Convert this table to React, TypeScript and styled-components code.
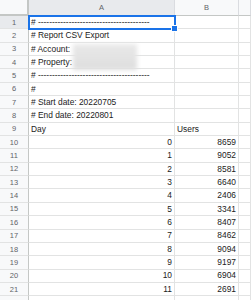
import React from 'react'
import styled, { createGlobalStyle } from 'styled-components'

const GlobalStyle = createGlobalStyle`
  html, body {
    margin: 0;
    padding: 0;
    background: #ffffff;
    overflow: hidden;
  }
  * {
    box-sizing: border-box;
  }
`

const DASHES = '# ' + '-'.repeat(40)

type Cell = { text?: string; align?: 'left' | 'right' }

const rows: Cell[][] = [
  [{ text: DASHES }, {}],
  [{ text: '# Report CSV Export' }, {}],
  [{ text: '# Account:' }, {}],
  [{ text: '# Property:' }, {}],
  [{ text: DASHES }, {}],
  [{ text: '#' }, {}],
  [{ text: '# Start date: 20220705' }, {}],
  [{ text: '# End date: 20220801' }, {}],
  [{ text: 'Day' }, { text: 'Users' }],
  ...[8659, 9052, 8581, 6640, 2406, 3341, 8407, 8462, 9094, 9197, 6904, 2691].map(
    (users, day): Cell[] => [
      { text: String(day), align: 'right' },
      { text: String(users), align: 'right' }
    ]
  )
]

export default function App (): JSX.Element {
  return (
    <>
      <GlobalStyle />
      <Sheet>
        <Corner />
        <ColHeader active>A</ColHeader>
        <ColHeader>B</ColHeader>
        <ColHeader />
        {rows.map((cells, i) => (
          <React.Fragment key={i}>
            <RowHeader active={i === 0}>{i + 1}</RowHeader>
            {cells.map((cell, j) => (
              <DataCell key={j} align={cell.align ?? 'left'} selected={i === 0 && j === 0}>
                {cell.text}
                {i === 0 && j === 0 && <FillHandle />}
              </DataCell>
            ))}
            <DataCell align="left" />
          </React.Fragment>
        ))}
        {/* trailing row, only its top edge shows */}
        <RowHeader />
        <DataCell align="left" />
        <DataCell align="left" />
        <DataCell align="left" />
        <Redaction />
      </Sheet>
    </>
  )
}

const Sheet = styled.div`
  position: relative;
  display: grid;
  grid-template-columns: 29px 146px 64px 1fr;
  grid-template-rows: 16px;
  grid-auto-rows: 13.35px;
  width: 251px;
  height: 300px;
  overflow: hidden;
  font-family: Arial, 'Liberation Sans', sans-serif;
  color: #222222;
`

const Corner = styled.div`
  background: #f8f9fa;
  border-right: 2px solid #c4c7c5;
  border-bottom: 2px solid #c4c7c5;
`

const ColHeader = styled.div<{ active?: boolean }>`
  display: flex;
  align-items: center;
  justify-content: center;
  background: ${(p) => (p.active ? '#e8eaed' : '#f8f9fa')};
  border-right: 1px solid #dadce0;
  border-bottom: 1px solid #c4c7c5;
  color: #5f6368;
  font-size: 7.5px;
`

const RowHeader = styled.div<{ active?: boolean }>`
  display: flex;
  align-items: center;
  justify-content: center;
  background: ${(p) => (p.active ? '#e8eaed' : '#f8f9fa')};
  border-right: 1px solid #c4c7c5;
  border-bottom: 1px solid #e2e3e3;
  color: #5f6368;
  font-size: 7.5px;
`

const DataCell = styled.div<{ align: 'left' | 'right'; selected?: boolean }>`
  position: relative;
  display: flex;
  align-items: flex-end;
  justify-content: ${(p) => (p.align === 'right' ? 'flex-end' : 'flex-start')};
  padding: 0 2px 1.5px 2px;
  border-right: 1px solid #e2e3e3;
  border-bottom: 1px solid #e2e3e3;
  font-size: 8.4px;
  line-height: 10px;
  white-space: nowrap;
  overflow: visible;
  z-index: ${(p) => (p.selected ? 2 : 'auto')};
  ${(p) =>
    p.selected &&
    `
    outline: 2px solid #1a73e8;
    outline-offset: -1px;
  `}
`

const FillHandle = styled.span`
  position: absolute;
  right: -3px;
  bottom: -3px;
  width: 5px;
  height: 5px;
  background: #1a73e8;
  border: 1px solid #ffffff;
  box-sizing: content-box;
  margin: -1px;
`

const Redaction = styled.div`
  position: absolute;
  left: 73px;
  top: 44px;
  width: 64px;
  height: 26px;
  background: linear-gradient(180deg, #e9e9e9 0%, #dedede 100%);
  filter: blur(2px);
  z-index: 3;
`
